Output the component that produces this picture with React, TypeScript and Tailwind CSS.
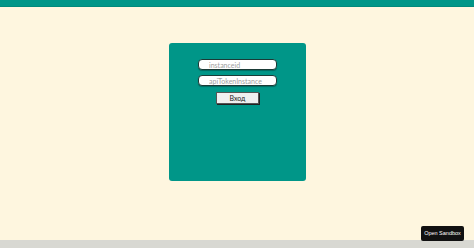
export default function App() {
  return (
    <div className="relative h-[248px] w-[474px] overflow-hidden bg-[#fef6df] font-['Lato',sans-serif]">
      <div className="h-[7px] bg-[#009688] border-b border-[#00897b]" />
      <div className="flex justify-center pt-[36px] pl-[1px]">
        <div className="w-[137px] h-[138px] rounded-[3px] bg-[#009688] flex flex-col items-center pt-[16px]">
          <input
            placeholder="instanceid"
            className="w-[79px] h-[11px] rounded-[4px] border border-[#1a3b37] bg-white pl-[10px] text-[7px] leading-none text-gray-500 placeholder:text-[#a0a0a0] outline-none shadow-[0_1px_1px_rgba(0,0,0,0.3)]"
          />
          <input
            placeholder="apiTokenInstance"
            className="mt-[5px] w-[79px] h-[11px] rounded-[4px] border border-[#1a3b37] bg-white pl-[10px] text-[7px] leading-none text-gray-500 placeholder:text-[#a0a0a0] outline-none shadow-[0_1px_1px_rgba(0,0,0,0.3)]"
          />
          <button className="mt-[6px] w-[43px] h-[12px] bg-[#f0f0f0] border border-[#555] shadow-[1px_1px_0_#222] text-[7px] leading-none text-[#222]">
            Вход
          </button>
        </div>
      </div>
      <div className="absolute bottom-0 left-0 right-0 h-[8px] bg-[#d8d8d2]" />
      <div className="absolute left-[421px] top-[226px] w-[43px] h-[15px] rounded-[2px] bg-[#111] flex items-center justify-center text-[5.5px] text-white font-['Liberation_Sans',sans-serif]">
        Open Sandbox
      </div>
    </div>
  );
}
